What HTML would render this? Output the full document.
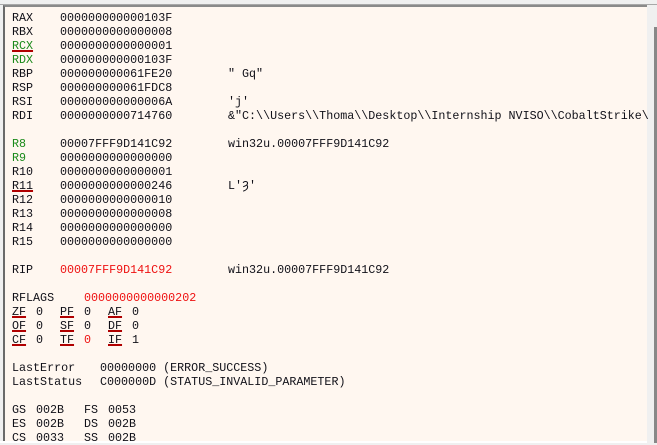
<!DOCTYPE html>
<html><head><style>
body{margin:0;width:657px;height:443px;background:#f0f0f0;position:relative;overflow:hidden;font-family:"Liberation Mono",monospace;font-size:11.7px;}
#top{position:absolute;left:0;top:4px;width:657px;height:1px;background:#a8a8a8}
#pane{position:absolute;left:3px;top:5px;width:644px;height:436px;background:#fff7f0;border-top:2px solid #8a8a8a;border-left:2px solid #6a6a6a;box-sizing:border-box}
#thumb{position:absolute;left:654px;top:27px;width:3px;height:416px;background:#888}
.t{position:absolute;white-space:pre;line-height:14px;color:#101018}
.g{color:#1a8a1a}.r{color:#ee1111}
.u{text-decoration:underline;text-decoration-color:#b00000;text-decoration-thickness:2px;text-underline-offset:1px}
</style></head><body>
<div id="top"></div><div id="pane"></div><div id="thumb"></div>
<div class="t" style="left:12px;top:11px">RAX
RBX
<span class="g u">RCX</span>
<span class="g">RDX</span>
RBP
RSP
RSI
RDI

<span class="g">R8</span>
<span class="g">R9</span>
R10
<span class="u">R11</span>
R12
R13
R14
R15

RIP

RFLAGS</div>
<div class="t" style="left:60px;top:11px">000000000000103F
0000000000000008
0000000000000001
000000000000103F
000000000061FE20
000000000061FDC8
000000000000006A
0000000000714760

00007FFF9D141C92
0000000000000000
0000000000000001
0000000000000246
0000000000000010
0000000000000008
0000000000000000
0000000000000000

<span class="r">00007FFF9D141C92</span></div>
<div class="t" style="left:228px;top:67px">" Gq"</div>
<div class="t" style="left:228px;top:95px">'j'
&amp;"C:\\Users\\Thoma\\Desktop\\Internship NVISO\\CobaltStrike\</div>
<div class="t" style="left:228px;top:137px">win32u.00007FFF9D141C92</div>
<div class="t" style="left:228px;top:179px">L'Ȝ'</div>
<div class="t" style="left:228px;top:263px">win32u.00007FFF9D141C92</div>
<div class="t r" style="left:84px;top:291px">0000000000000202</div>

<div class="t" style="left:12px;top:305px"><span class="u">ZF</span>
<span class="u">OF</span>
<span class="u">CF</span></div>
<div class="t" style="left:36px;top:305px">0
0
0</div>
<div class="t" style="left:60px;top:305px"><span class="u">PF</span>
<span class="u">SF</span>
<span class="u">TF</span></div>
<div class="t" style="left:84px;top:305px">0
0
<span class="r">0</span></div>
<div class="t" style="left:108px;top:305px"><span class="u">AF</span>
<span class="u">DF</span>
<span class="u">IF</span></div>
<div class="t" style="left:132px;top:305px">0
0
1</div>

<div class="t" style="left:12px;top:361px">LastError
LastStatus</div>
<div class="t" style="left:100px;top:361px">00000000 (ERROR_SUCCESS)
C000000D (STATUS_INVALID_PARAMETER)</div>

<div class="t" style="left:12px;top:403px">GS
ES
CS</div>
<div class="t" style="left:36px;top:403px">002B
002B
0033</div>
<div class="t" style="left:84px;top:403px">FS
DS
SS</div>
<div class="t" style="left:108px;top:403px">0053
002B
002B</div>
<div style="position:absolute;left:0;top:441px;width:647px;height:2px;background:#fff"></div>
</body></html>
